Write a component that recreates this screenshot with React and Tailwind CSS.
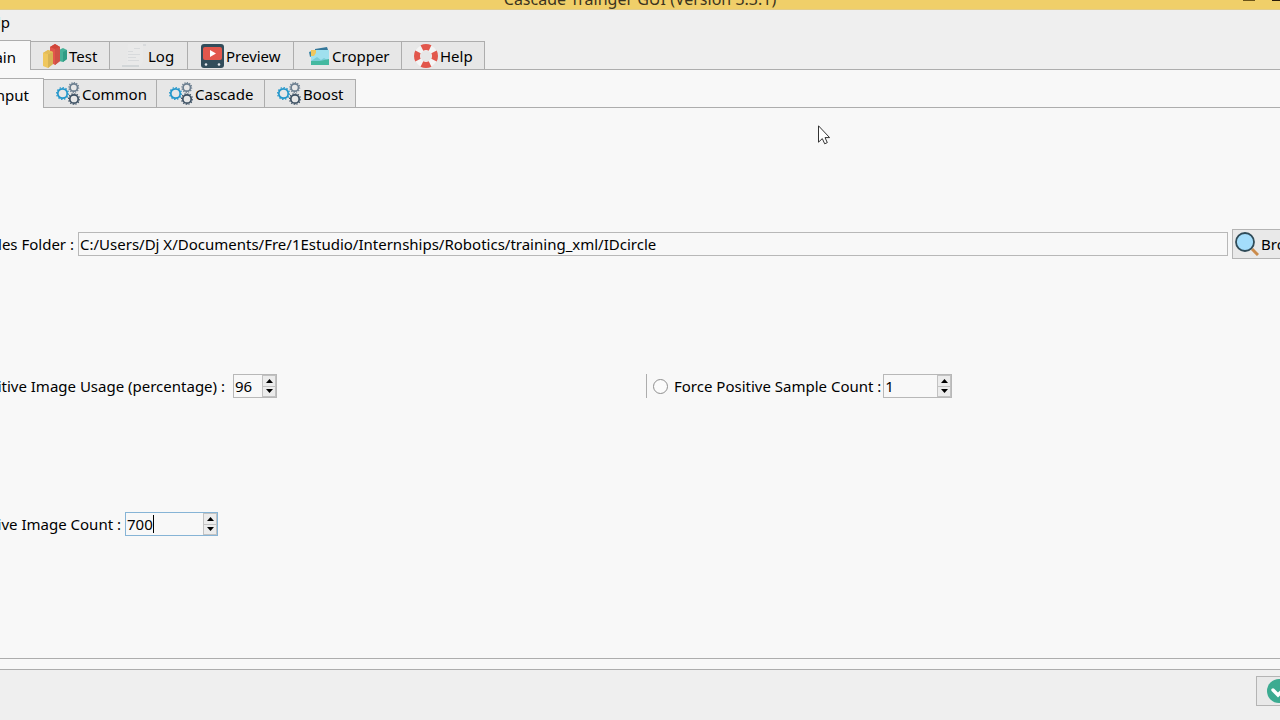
import React, { useState } from "react";

/* ---------- icons ---------- */

function TestIcon() {
  return (
    <svg className="h-6 w-6 shrink-0" viewBox="0 0 24 24">
      <path d="M16 6l4-2 4 2v9l-4 3-4-1z" fill="#45b097" />
      <path d="M20 8l4-2v9l-4 3z" fill="#2f9c84" />
      <path d="M7 3l5-3 5 3v14l-5 4-5-3z" fill="#e2574c" />
      <path d="M12 5l5-2v14l-5 4z" fill="#cf5046" />
      <path d="M7 3l5-3 5 3-5 2z" fill="#d0453a" />
      <path d="M0 9l5-3 5 2v12l-5 4-5-2z" fill="#efc75e" />
      <path d="M5 10l5-2v12l-5 4z" fill="#d7b354" />
      <path d="M0 9l5-3 5 2-5 2z" fill="#e3bc57" />
    </svg>
  );
}

function LogIcon() {
  return (
    <svg className="h-6 w-6 shrink-0" viewBox="0 0 24 24">
      <path d="M6 0h15v18l-3 4H0v-2h5z" fill="#e9e9e9" />
      <path
        d="M21 0h3v2h-3zM12 4h6v1h-6zM6 7h5v1H6zM6 10h12v1H6zM6 13h8v1H6zM6 16h11v1H6z"
        fill="#d8dadc"
      />
      <path d="M0 21h17v2H0z" fill="#d2d6d8" />
    </svg>
  );
}

function PreviewIcon() {
  return (
    <svg className="h-6 w-6 shrink-0" viewBox="0 0 24 24">
      <rect x="1" width="23" height="24" rx="3" fill="#324d5b" />
      <rect x="3" y="3" width="19" height="13" rx="2" fill="#e2574c" />
      <path d="M10 6l6 3.5-6 3.5z" fill="#fff" />
      <circle cx="6" cy="20.5" r="1.3" fill="#e6e9ee" />
      <circle cx="19" cy="20.5" r="1.3" fill="#e6e9ee" />
    </svg>
  );
}

function CropperIcon() {
  return (
    <svg className="h-6 w-6 shrink-0" viewBox="0 0 24 24">
      <path d="M9 5l12-2 1 3H9z" fill="#35789b" />
      <path d="M3 8l3-1v5l-2 1z" fill="#3a86a8" />
      <rect x="5" y="6" width="18" height="15" fill="#9fe0ee" />
      <path d="M5 17l6-4 4 3 3-2 5 3v4H5z" fill="#7accd6" />
      <path d="M5 17h9l9-2v6H5z" fill="#45b9a0" />
      <path d="M5 6h5v3l-2 3H5z" fill="#efc75e" />
    </svg>
  );
}

function HelpIcon() {
  return (
    <svg className="h-6 w-6 shrink-0" viewBox="0 0 24 24">
      <circle cx="12" cy="12" r="8.5" fill="none" stroke="#f4f4f4" strokeWidth="6" />
      <circle
        cx="12"
        cy="12"
        r="9"
        fill="none"
        stroke="#e2574c"
        strokeWidth="6"
        pathLength="80"
        strokeDasharray="12 8"
        strokeDashoffset="6"
      />
    </svg>
  );
}

function Gear({ cx, cy, r, color }) {
  return (
    <g fill="none" stroke={color}>
      <circle cx={cx} cy={cy} r={r} strokeWidth="1.7" />
      <circle
        cx={cx}
        cy={cy}
        r={r + 1.2}
        strokeWidth="1.2"
        pathLength="24"
        strokeDasharray="1 1"
      />
    </g>
  );
}

function GearsIcon() {
  return (
    <svg className="h-6 w-6 shrink-0" viewBox="0 0 24 24">
      <Gear cx={6.5} cy={11.5} r={4.7} color="#2196cb" />
      <Gear cx={17.8} cy={5.5} r={3.7} color="#6c7f90" />
      <Gear cx={18} cy={17} r={4.2} color="#3b4f62" />
    </svg>
  );
}

function SearchIcon() {
  return (
    <svg className="h-6 w-6 shrink-0" viewBox="0 0 24 24">
      <path d="M17 17l6 6" stroke="#cb8b4b" strokeWidth="3" />
      <circle cx="10" cy="10" r="9" fill="#a4ddfb" stroke="#2f4b58" strokeWidth="1.8" />
    </svg>
  );
}

function StartIcon() {
  return (
    <svg className="h-6 w-6 shrink-0" viewBox="0 0 24 24">
      <circle cx="12" cy="12" r="12" fill="#3cab91" />
      <path d="M6 11l5 5 8-8" fill="none" stroke="#fff" strokeWidth="3.4" strokeLinecap="round" />
    </svg>
  );
}

function PointerIcon() {
  return (
    <svg className="h-5 w-3" viewBox="0 0 12 20">
      <path
        d="M.5.8v16.4l3.8-3.6 2.4 5.2 2.6-1.2-2.3-5h4.6z"
        fill="#fff"
        stroke="#333"
      />
    </svg>
  );
}

/* ---------- controls ---------- */

function Tab({ icon, label, width, active, onClick }) {
  return (
    <button
      type="button"
      role="tab"
      aria-selected={active}
      onClick={onClick}
      className={`flex shrink-0 items-center gap-0.5 overflow-hidden border-r border-t border-[#adadad] whitespace-nowrap ${width} ${
        active
          ? "-mb-px h-[30px] justify-end bg-[#f8f8f8] pt-0.5 pr-3.5"
          : "h-7 justify-start bg-[#e7e7e7] pt-px pl-3"
      }`}
    >
      {icon}
      <span>{label}</span>
    </button>
  );
}

function SpinBox({ id, initial, width, focused, ...rest }) {
  const [value, setValue] = useState(initial);

  return (
    <div
      className={`relative flex h-6 border bg-[#f8f8f8] ${width} ${
        focused ? "border-[#86b4d6]" : "border-[#b8b8b8]"
      }`}
    >
      <input
        id={id}
        type="number"
        value={value}
        onChange={(e) => setValue(Number(e.target.value))}
        className="w-0 min-w-0 flex-1 bg-transparent pl-px outline-none [appearance:textfield] [&::-webkit-inner-spin-button]:appearance-none"
        {...rest}
      />
      {focused && <span className="absolute top-0.5 left-[27px] h-[18px] w-px bg-black" />}
      <div className="flex w-3.5 shrink-0 flex-col">
        <button
          type="button"
          aria-label="Increase"
          onClick={() => setValue(value + 1)}
          className="flex flex-1 items-center justify-center border border-[#c2c2c2] bg-[#ececec]"
        >
          <svg className="h-1 w-[7px]" viewBox="0 0 7 4">
            <path d="M0 4h7L3.5 0z" />
          </svg>
        </button>
        <button
          type="button"
          aria-label="Decrease"
          onClick={() => setValue(value - 1)}
          className="flex flex-1 items-center justify-center border border-t-0 border-[#c2c2c2] bg-[#ececec]"
        >
          <svg className="h-1 w-[7px]" viewBox="0 0 7 4">
            <path d="M0 0h7L3.5 4z" />
          </svg>
        </button>
      </div>
    </div>
  );
}

function FieldLabel({ htmlFor, width, children }) {
  return (
    <label
      htmlFor={htmlFor}
      className={`flex shrink-0 justify-end overflow-hidden whitespace-nowrap ${width}`}
    >
      {children}
    </label>
  );
}

/* ---------- page ---------- */

const mainTabs = [
  { label: "Main", width: "w-[31px]" },
  { label: "Test", width: "w-[79px]", icon: <TestIcon /> },
  { label: "Log", width: "w-[78px]", icon: <LogIcon /> },
  { label: "Preview", width: "w-[106px]", icon: <PreviewIcon /> },
  { label: "Cropper", width: "w-[108px]", icon: <CropperIcon /> },
  { label: "Help", width: "w-[83px]", icon: <HelpIcon /> },
];

const trainTabs = [
  { label: "Input", width: "w-11" },
  { label: "Common", width: "w-[113px]", icon: <GearsIcon /> },
  { label: "Cascade", width: "w-[108px]", icon: <GearsIcon /> },
  { label: "Boost", width: "w-[91px]", icon: <GearsIcon /> },
];

function TabRow({ tabs, label }) {
  const [active, setActive] = useState(tabs[0].label);

  return (
    <div role="tablist" aria-label={label} className="flex h-[30px] items-end border-b border-[#adadad]">
      {tabs.map((tab) => (
        <Tab
          key={tab.label}
          {...tab}
          active={active === tab.label}
          onClick={() => setActive(tab.label)}
        />
      ))}
    </div>
  );
}

export default function App() {
  const [folder, setFolder] = useState(
    "C:/Users/Dj X/Documents/Fre/1Estudio/Internships/Robotics/training_xml/IDcircle"
  );
  const [force, setForce] = useState(false);

  return (
    <div className="relative flex min-h-screen flex-col overflow-hidden bg-[#efefef] font-['Noto_Sans','Open_Sans',sans-serif] text-[15px] leading-5 text-black">
      {/* Title bar */}
      <header className="relative flex h-2.5 shrink-0 items-end justify-center overflow-hidden border-b border-[#e3cd8c] bg-[#f0cf69]">
        <h1 className="shrink-0 text-base leading-5 whitespace-nowrap text-[#3b3420]">
          Cascade Trainger GUI (Version 3.3.1)
        </h1>
        <span className="absolute top-0 right-[25px] h-px w-3 bg-[#6b5418]" />
        <span className="absolute top-0 right-0 h-px w-2 bg-[#2a1a08]" />
      </header>

      {/* Menu */}
      <nav className="flex h-[30px] shrink-0 items-start">
        <button type="button" className="flex h-6 w-2.5 items-center justify-end overflow-hidden">
          Help
        </button>
      </nav>

      <TabRow tabs={mainTabs} label="Sections" />

      <main className="flex flex-1 flex-col border-b border-[#adadad] bg-[#f8f8f8] pt-2 pb-2.5">
        <TabRow tabs={trainTabs} label="Train settings" />

        <section className="flex-1 border-b border-[#adadad] pt-[121px]">
          <div className="flex h-[30px] items-center">
            <FieldLabel htmlFor="folder" width="w-[74px]">
              Samples Folder :
            </FieldLabel>
            <input
              id="folder"
              type="text"
              value={folder}
              onChange={(e) => setFolder(e.target.value)}
              className="ml-1 h-6 min-w-0 flex-1 border border-[#b8b8b8] bg-[#f8f8f8] pl-px outline-none"
            />
            <button
              type="button"
              className="ml-1 flex h-[30px] w-12 shrink-0 items-center gap-0.5 overflow-hidden border border-r-0 border-[#b4b4b4] bg-[#e9e9e9] pl-0.5"
            >
              <SearchIcon />
              <span>Browse</span>
            </button>
          </div>

          <div className="mt-28 grid h-[30px] grid-cols-2 items-center">
            <div className="flex items-center gap-2">
              <FieldLabel htmlFor="usage" width="w-[225px]">
                Positive Image Usage (percentage) :
              </FieldLabel>
              <SpinBox id="usage" initial={96} width="w-11" />
            </div>
            <div className="ml-1.5 flex items-center border-l border-[#adadad] pl-1.5">
              <input
                id="force"
                type="radio"
                checked={force}
                onChange={() => setForce(true)}
                className="h-[15px] w-[15px] appearance-none rounded-full border border-[#8f8f8f] bg-[#fbfbfb] checked:bg-[#444]"
              />
              <label htmlFor="force" className="mr-0.5 ml-1.5 whitespace-nowrap">
                Force Positive Sample Count :
              </label>
              <SpinBox
                id="sample-count"
                initial={1}
                width="w-[69px]"
                aria-label="Force Positive Sample Count"
              />
            </div>
          </div>

          <div className="mt-27 flex h-[30px] items-center gap-1">
            <FieldLabel htmlFor="negative" width="w-[121px]">
              Negative Image Count :
            </FieldLabel>
            <SpinBox id="negative" initial={700} width="w-[93px]" focused />
          </div>
        </section>
      </main>

      <footer className="flex h-[50px] shrink-0 items-start justify-end pt-1.5">
        <button
          type="button"
          aria-label="Start"
          className="flex h-[30px] w-6 items-center overflow-hidden border border-r-0 border-[#b4b4b4] bg-[#e9e9e9] pl-2.5"
        >
          <StartIcon />
        </button>
      </footer>

      {/* Mouse pointer */}
      <div className="pointer-events-none absolute top-[125px] left-[818px]">
        <PointerIcon />
      </div>
    </div>
  );
}
